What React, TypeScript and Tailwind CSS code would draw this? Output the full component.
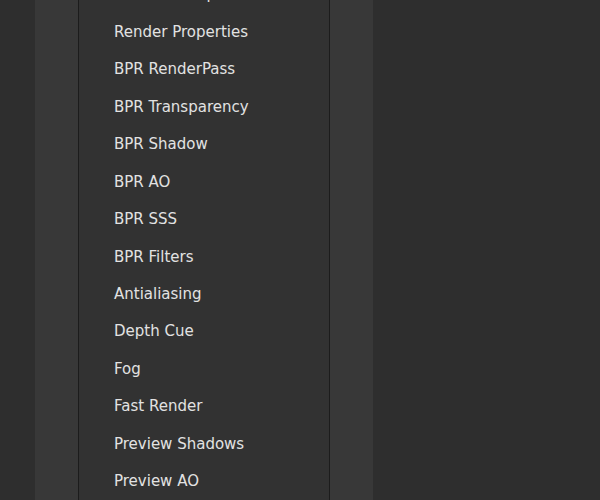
const items = [
  'Render Composite',
  'Render Properties',
  'BPR RenderPass',
  'BPR Transparency',
  'BPR Shadow',
  'BPR AO',
  'BPR SSS',
  'BPR Filters',
  'Antialiasing',
  'Depth Cue',
  'Fog',
  'Fast Render',
  'Preview Shadows',
  'Preview AO',
];

export default function App() {
  return (
    <div className="flex h-[500px] w-[600px] overflow-hidden bg-[#2e2e2e] font-['DejaVu_Sans',sans-serif]">
      <div className="w-[35px] shrink-0 bg-[#2e2e2e]" />
      <div className="w-[43px] shrink-0 bg-[#383838]" />
      <div className="w-[252px] shrink-0 border-x border-[#1c1c1c] bg-[#323232]">
        <div className="-mt-[24px] flex flex-col">
          {items.map((item) => (
            <div key={item} className="flex h-[37.45px] shrink-0 items-center pl-[35px] text-[15px] text-[#e2e2e2]">
              {item}
            </div>
          ))}
        </div>
      </div>
      <div className="w-[43px] shrink-0 bg-[#383838]" />
      <div className="flex-1 bg-[#2e2e2e]" />
    </div>
  );
}
